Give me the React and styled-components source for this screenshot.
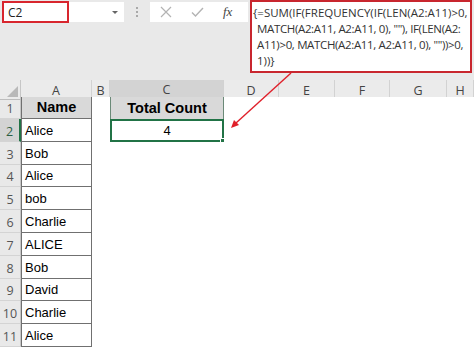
import React from "react";
import styled, { createGlobalStyle } from "styled-components";

const Global = createGlobalStyle`
  html, body { margin: 0; padding: 0; background: #fff; }
  body { width: 474px; height: 349px; overflow: hidden; font-family: "Liberation Sans", Arial, sans-serif; }
  * { box-sizing: border-box; }
`;

const COLS = "21px 71px 18px 114px 55px 56px 55px 57px 1fr";
const GREEN = "#217346";

const Page = styled.div`
  position: relative;
  width: 474px;
  height: 349px;
  overflow: hidden;
  background: #fff;
`;

const TopBar = styled.div`
  height: 80px;
  background: #e9e9e9;
  display: flex;
  align-items: flex-start;
  padding-left: 2px;
`;

const NameBox = styled.div`
  position: relative;
  margin-top: 2px;
  width: 122px;
  height: 20px;
  background: #fff;
  display: flex;
  align-items: center;
  padding-left: 6px;
  font: 12px "Open Sans", sans-serif;
  color: #222;
`;

const Highlight = styled.div`
  position: absolute;
  left: 0;
  top: -1px;
  width: 67px;
  height: 22px;
  border: 2px solid #d8262e;
`;

const Caret = styled.span`
  position: absolute;
  right: 6px;
  top: 9px;
  border-left: 3px solid transparent;
  border-right: 3px solid transparent;
  border-top: 3px solid #666;
`;

const Grip = styled.div`
  width: 26px;
  height: 24px;
  display: flex;
  flex-direction: column;
  align-items: center;
  justify-content: center;
  gap: 2px;
`;

const Dot = styled.span`
  width: 2px;
  height: 2px;
  background: #a9a9a9;
`;

const FxBox = styled.div`
  margin-top: 2px;
  width: 98px;
  height: 20px;
  background: #fff;
  display: flex;
  align-items: center;
  padding-left: 10px;
  gap: 19px;
`;

const Fx = styled.span`
  font: italic 13px "Liberation Serif", "Times New Roman", serif;
  color: #444;
`;

const FormulaBox = styled.div`
  margin-left: 2px;
  width: 222px;
  height: 73px;
  background: #fff;
  border: 2px solid #c8262e;
  padding: 3px 0 0 5px;
  font: 11.5px "Open Sans", sans-serif;
  line-height: 16px;
  color: #333;
`;

const FLine = styled.div`
  white-space: nowrap;
  margin-left: ${(p) => (p.$hang ? "-4px" : "0")};
  letter-spacing: ${(p) => p.$ls || 0}px;
`;

const Row = styled.div`
  display: grid;
  grid-template-columns: ${COLS};
  height: ${(p) => p.$h}px;
`;

const Corner = styled.div`
  position: relative;
  background: #ebebeb;
  border-right: 1px solid #c6c6c6;
  border-bottom: 1px solid #bdbdbd;
`;

const CornerTri = styled.span`
  position: absolute;
  right: 2px;
  bottom: 2px;
  width: 0;
  height: 0;
  border-left: 11px solid transparent;
  border-bottom: 11px solid #b9b9b9;
`;

const ColHead = styled.div`
  background: ${(p) => (p.$sel ? "#d3d3d3" : "#ebebeb")};
  border-right: 1px solid #d2d2d2;
  border-bottom: ${(p) => (p.$sel ? `2px solid ${GREEN}` : "1px solid #bdbdbd")};
  display: flex;
  align-items: center;
  justify-content: center;
  font: 12.5px "Open Sans", sans-serif;
  color: #444;
  padding-top: 1px;
`;

const RowHead = styled.div`
  background: ${(p) => (p.$sel ? "#d3d3d3" : "#e9e9e9")};
  border-bottom: 1px solid #d4d4d4;
  border-right: ${(p) => (p.$sel ? `2px solid ${GREEN}` : "1px solid #c6c6c6")};
  display: flex;
  align-items: flex-end;
  justify-content: center;
  padding-bottom: 1px;
  font: 12.5px "Open Sans", sans-serif;
  color: ${(p) => (p.$sel ? "#2c5e43" : "#555")};
`;

const Cell = styled.div`
  position: relative;
  display: flex;
  align-items: flex-end;
  justify-content: ${(p) => (p.$center ? "center" : "flex-start")};
  padding: 0 3px 3px;
  font-size: ${(p) => (p.$head ? "14.5px" : "13px")};
  font-weight: ${(p) => (p.$head ? 700 : 400)};
  color: #000;
  background: ${(p) => (p.$head ? "#d9d9d9" : "#fff")};
  border-left: ${(p) => p.$bl || "none"};
  border-right: ${(p) => p.$br || "none"};
  border-bottom: ${(p) => p.$bb || "none"};
  border-top: ${(p) => p.$bt || "none"};
`;

const Selected = styled(Cell)`
  border: 2px solid ${GREEN};
  padding-bottom: 2px;
`;

const Handle = styled.span`
  position: absolute;
  right: -4px;
  bottom: -4px;
  width: 6px;
  height: 6px;
  background: ${GREEN};
  border: 1px solid #fff;
`;

const Arrow = styled.svg`
  position: absolute;
  left: 0;
  top: 0;
  pointer-events: none;
`;

const TB = "1.5px solid #707070";

const names = ["Alice", "Bob", "Alice", "bob", "Charlie", "ALICE", "Bob", "David", "Charlie", "Alice"];
const letters = ["A", "B", "C", "D", "E", "F", "G", "H"];

export default function App() {
  return (
    <Page>
      <Global />
      <TopBar>
        <NameBox>
          C2
          <Highlight />
          <Caret />
        </NameBox>
        <Grip>
          <Dot />
          <Dot />
          <Dot />
        </Grip>
        <FxBox>
          <svg width="12" height="12" viewBox="0 0 12 12">
            <path d="M1 1 L11 11 M11 1 L1 11" stroke="#b3b3b3" strokeWidth="1.2" fill="none" />
          </svg>
          <svg width="13" height="12" viewBox="0 0 13 12">
            <path d="M1 6.5 L4.5 10 L12 2" stroke="#b3b3b3" strokeWidth="1.4" fill="none" />
          </svg>
          <Fx>fx</Fx>
        </FxBox>
        <FormulaBox>
          <FLine $hang>{"{=SUM(IF(FREQUENCY(IF(LEN(A2:A11)>0,"}</FLine>
          <FLine $ls={-0.35}>{'MATCH(A2:A11, A2:A11, 0), ""), IF(LEN(A2:'}</FLine>
          <FLine $ls={-0.35}>{'A11)>0, MATCH(A2:A11, A2:A11, 0), ""))>0,'}</FLine>
          <FLine>{"1))}"}</FLine>
        </FormulaBox>
      </TopBar>

      <Row $h={17}>
        <Corner>
          <CornerTri />
        </Corner>
        {letters.map((l) => (
          <ColHead key={l} $sel={l === "C"}>
            {l}
          </ColHead>
        ))}
      </Row>

      <Row $h={22}>
        <RowHead>1</RowHead>
        <Cell $head $center $bl={TB} $br={TB} $bb={TB}>
          Name
        </Cell>
        <Cell />
        <Cell $head $center $bl="1px solid #6b8a78" $br="1px solid #6b8a78">
          Total Count
        </Cell>
        <Cell />
        <Cell />
        <Cell />
        <Cell />
        <Cell />
      </Row>

      {names.map((n, i) => (
        <Row $h={22.8} key={i}>
          <RowHead $sel={i === 0}>{i + 2}</RowHead>
          <Cell $bl={TB} $br={TB} $bb={TB}>
            {n}
          </Cell>
          <Cell />
          {i === 0 ? (
            <Selected $center>
              4
              <Handle />
            </Selected>
          ) : (
            <Cell />
          )}
          <Cell />
          <Cell />
          <Cell />
          <Cell />
          <Cell />
        </Row>
      ))}

      <Arrow width="474" height="349" viewBox="0 0 474 349">
        <line x1="291" y1="73" x2="236" y2="123" stroke="#e0202a" strokeWidth="1.4" />
        <polygon points="231,128 239,125 234,120" fill="#e0202a" />
      </Arrow>
    </Page>
  );
}
